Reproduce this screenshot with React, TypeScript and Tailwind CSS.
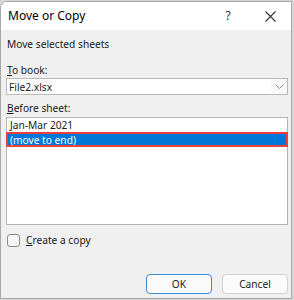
import { useState } from "react";

const font = { fontFamily: '"Noto Sans", "Open Sans", sans-serif' };

function Chevron() {
  return (
    <svg width="9" height="5" viewBox="0 0 9 5" fill="none">
      <path d="M0.5 0.5 L4.5 4.5 L8.5 0.5" stroke="#8a8a8a" strokeWidth="1" />
    </svg>
  );
}

export default function App() {
  const [copy, setCopy] = useState(false);
  const [selected, setSelected] = useState(1);
  const sheets = ["Jan-Mar 2021", "(move to end)"];

  return (
    <div className="w-[294px] h-[300px] bg-[#d6d6d6] pt-px" style={font}>
      <div className="w-[292px] h-[298px] bg-[#f0f0f0] border border-[#a8a8a8] rounded-tl-[7px] overflow-hidden text-[10.2px] leading-[16px] text-[#1a1a1a]">
        {/* title bar */}
        <div className="h-[28px] bg-white flex items-center pl-[7px] pr-[15px]">
          <span className="text-[12px] text-black">Move or Copy</span>
          <span className="ml-auto text-[12px] text-[#333] w-[12px] text-center translate-x-[2px]">?</span>
          <svg className="ml-[33px]" width="11" height="11" viewBox="0 0 11 11">
            <path d="M0.5 0.5 L10.5 10.5 M10.5 0.5 L0.5 10.5" stroke="#333" strokeWidth="1.1" />
          </svg>
        </div>

        <div className="pl-[5px] pr-[3px] flex flex-col">
          <div className="mt-[6px] pl-px">Move selected sheets</div>

          <div className="mt-[10px] pl-px">
            <span className="underline">T</span>o book:
          </div>
          <div className="h-[17px] bg-white border border-[#b9b9b9] flex items-center">
            <span className="pl-[2px] flex-1">File2.xlsx</span>
            <div className="w-[16px] h-full bg-[#f8f8f8] flex items-center justify-center">
              <Chevron />
            </div>
          </div>

          <div className="mt-[5px] pl-px">
            <span className="underline">B</span>efore sheet:
          </div>
          <div className="mt-px h-[108px] bg-white border border-[#b4b4b4] flex flex-col">
            {sheets.map((s, i) =>
              i === selected ? (
                <div
                  key={s}
                  onClick={() => setSelected(i)}
                  className="-mx-px h-[15px] bg-[#0078d7] border-2 border-[#e8413a] text-white flex items-center pl-[2px]"
                >
                  {s}
                </div>
              ) : (
                <div
                  key={s}
                  onClick={() => setSelected(i)}
                  className="h-[14px] flex items-center pl-[3px]"
                >
                  {s}
                </div>
              )
            )}
          </div>

          <label className="mt-[7px] flex items-center gap-[6px] pl-px">
            <span
              onClick={() => setCopy(!copy)}
              className="w-[13px] h-[13px] rounded-[3px] border border-[#8c8c8c] bg-[#f6f6f6]"
            />
            <span>
              <span className="underline">C</span>reate a copy
            </span>
          </label>

          <div className="mt-[26px] flex justify-end gap-[10px]">
            <button className="w-[66px] h-[20px] rounded-[4px] border border-[#3b8ad8] bg-[#fbfbfb] text-[10.2px]">
              OK
            </button>
            <button className="w-[66px] h-[20px] rounded-[4px] border border-[#d2d2d2] bg-[#fbfbfb] text-[10.2px]">
              Cancel
            </button>
          </div>
        </div>
      </div>
    </div>
  );
}
